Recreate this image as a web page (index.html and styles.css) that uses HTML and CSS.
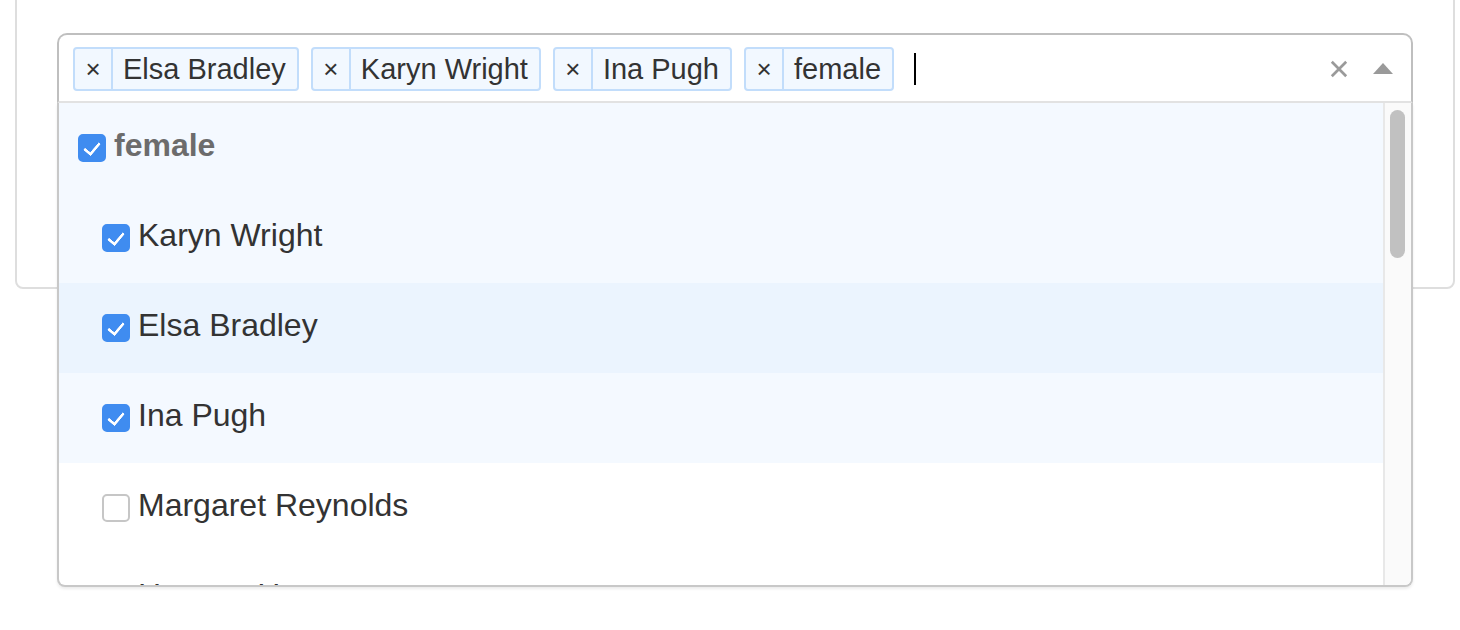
FILE: index.html
```html
<!DOCTYPE html>
<html>
<head>
<meta charset="utf-8">
<link rel="stylesheet" href="styles.css">
</head>
<body>
<div class="card">
  <div class="select">
    <div class="control">
      <div class="values">
        <div class="tag"><span class="tag-x">×</span><span class="tag-label">Elsa Bradley</span></div>
        <div class="tag"><span class="tag-x">×</span><span class="tag-label">Karyn Wright</span></div>
        <div class="tag"><span class="tag-x">×</span><span class="tag-label">Ina Pugh</span></div>
        <div class="tag"><span class="tag-x">×</span><span class="tag-label">female</span></div>
        <span class="caret"></span>
      </div>
      <div class="actions">
        <svg class="clear" width="20" height="20" viewBox="0 0 20 20"><path d="M2 2L18 18M18 2L2 18" stroke="#9a9a9a" stroke-width="3" fill="none"/></svg>
        <svg class="arrow" width="22" height="12" viewBox="0 0 22 12"><path d="M11 0L22 12H0Z" fill="#9a9a9a"/></svg>
      </div>
    </div>
    <div class="menu">
      <div class="list">
        <div class="row group selected"><span class="cb on"></span><span class="label">female</span></div>
        <div class="row child selected"><span class="cb on"></span><span class="label">Karyn Wright</span></div>
        <div class="row child current"><span class="cb on"></span><span class="label">Elsa Bradley</span></div>
        <div class="row child selected"><span class="cb on"></span><span class="label">Ina Pugh</span></div>
        <div class="row child"><span class="cb"></span><span class="label">Margaret Reynolds</span></div>
        <div class="row child partial"><span class="cb-space"></span><span class="label">Heaven Harvey</span></div>
      </div>
      <div class="track"><div class="thumb"></div></div>
    </div>
  </div>
</div>
</body>
</html>
```

FILE: styles.css
```css
* { box-sizing: border-box; }
html, body { margin: 0; padding: 0; background: #fff; }
body {
  font-family: "Liberation Sans", Arial, sans-serif;
  color: #333;
  overflow: hidden;
  height: 630px;
}
.card {
  margin: -20px 0 0 15px;
  width: 1440px;
  height: 309px;
  border: 2px solid #dedede;
  border-radius: 8px;
  padding: 51px 40px 0 40px;
}
.select {
  position: relative;
  width: 1356px;
}
.control {
  display: flex;
  align-items: center;
  background: #fff;
  border: 2px solid #bfbfbf;
  border-bottom: 2px solid #e2e2e2;
  border-radius: 10px 10px 0 0;
  padding: 12px 0 10px 14px;
  height: 70px;
}
.values {
  flex: 1;
  display: flex;
  align-items: center;
  gap: 12px;
}
.tag {
  display: flex;
  height: 44px;
  background: #f2f8ff;
  border: 2px solid #c2ddfb;
  border-radius: 4px;
  font-size: 29px;
  line-height: 40px;
  color: #333;
}
.tag-x {
  width: 38px;
  text-align: center;
  border-right: 2px solid #c2ddfb;
  font-size: 26px;
}
.tag-label {
  padding: 0 11px 0 10px;
}
.caret {
  display: block;
  width: 2px;
  height: 32px;
  background: #000;
  margin-left: 8px;
}
.actions {
  display: flex;
  align-items: center;
  gap: 25px;
  padding-right: 18px;
}
.clear { width: 18px; height: 18px; }
.arrow { width: 20px; height: 11px; margin-top: -1px; }
.menu {
  position: absolute;
  top: 70px;
  left: 0;
  width: 1356px;
  height: 484px;
  display: flex;
  background: #fff;
  border: 2px solid #c8c8c8;
  border-top: none;
  border-radius: 0 0 8px 8px;
  box-shadow: 0 2px 3px rgba(0,0,0,0.08);
  overflow: hidden;
}
.list {
  flex: 1;
  overflow: hidden;
}
.row {
  height: 90px;
  display: flex;
  align-items: center;
  font-size: 32px;
}
.row.group { padding-left: 19px; }
.row.child { padding-left: 43px; }
.row.selected { background: #f4f9ff; }
.row.current { background: #ebf4fe; }
.group .label { font-weight: bold; color: #6c6c6c; margin-top: -6px; }
.child .label { color: #333; margin-top: -6px; }
.cb, .cb-space {
  width: 28px;
  height: 28px;
  margin-right: 8px;
  flex: none;
}
.cb {
  border-radius: 5px;
  border: 2px solid #c6c6c6;
  background: #fff;
  position: relative;
}
.cb.on {
  background: #3f8cf0;
  border-color: #3f8cf0;
}
.cb.on::after {
  content: "";
  position: absolute;
  left: 7px;
  top: 3px;
  width: 7px;
  height: 13px;
  border: solid #fff;
  border-width: 0 3px 3px 0;
  transform: rotate(40deg);
  border-radius: 1px;
}
.track {
  width: 28px;
  flex: none;
  background: #fafafa;
  border-left: 2px solid #e8e8e8;
  padding-top: 7px;
}
.thumb {
  width: 15px;
  height: 148px;
  margin-left: 5px;
  background: #c1c1c1;
  border-radius: 8px;
}
```
